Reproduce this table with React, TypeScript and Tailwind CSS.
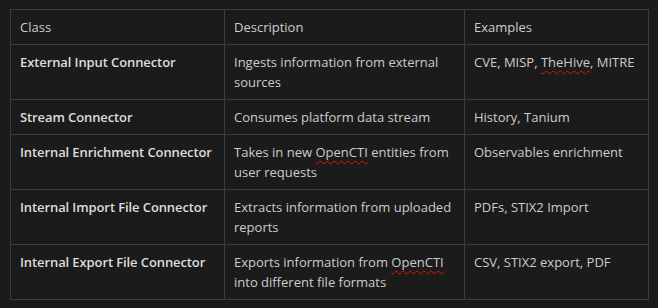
import React from "react";

const Sp = ({ children }: { children: React.ReactNode }) => (
  <span className="underline decoration-wavy decoration-[#e51400] decoration-1 underline-offset-[3px]">{children}</span>
);

type Row = { c: React.ReactNode; d: React.ReactNode; e: React.ReactNode };

const rows: Row[] = [
  {
    c: "External Input Connector",
    d: "Ingests information from external sources",
    e: (
      <>
        CVE, MISP, <Sp>TheHive</Sp>, MITRE
      </>
    ),
  },
  { c: "Stream Connector", d: "Consumes platform data stream", e: "History, Tanium" },
  {
    c: "Internal Enrichment Connector",
    d: (
      <>
        Takes in new <Sp>OpenCTI</Sp> entities from user requests
      </>
    ),
    e: "Observables enrichment",
  },
  {
    c: "Internal Import File Connector",
    d: "Extracts information from uploaded reports",
    e: "PDFs, STIX2 Import",
  },
  {
    c: "Internal Export File Connector",
    d: (
      <>
        Exports information from <Sp>OpenCTI</Sp> into different file formats
      </>
    ),
    e: "CSV, STIX2 export, PDF",
  },
];

const cell = "border-l border-t border-[#3c3c3c] px-[9px] py-[7px]";

export default function App() {
  return (
    <div
      className="w-[658px] h-[308px] bg-[#1b1b1b] pt-[9px] pl-[10px] text-[13px] leading-[20px] text-[#cccccc]"
      style={{ fontFamily: '"Segoe UI", "Open Sans", sans-serif' }}
    >
      <div className="grid w-[639px] grid-cols-[214px_240px_184px] border-r border-b border-[#3c3c3c]">
        <div className={cell}>Class</div>
        <div className={cell}>Description</div>
        <div className={cell}>Examples</div>
        {rows.map((r, i) => (
          <React.Fragment key={i}>
            <div className={`${cell} whitespace-nowrap font-semibold tracking-[-0.1px] text-[#dddddd]`}>{r.c}</div>
            <div className={cell}>{r.d}</div>
            <div className={cell}>{r.e}</div>
          </React.Fragment>
        ))}
      </div>
    </div>
  );
}
